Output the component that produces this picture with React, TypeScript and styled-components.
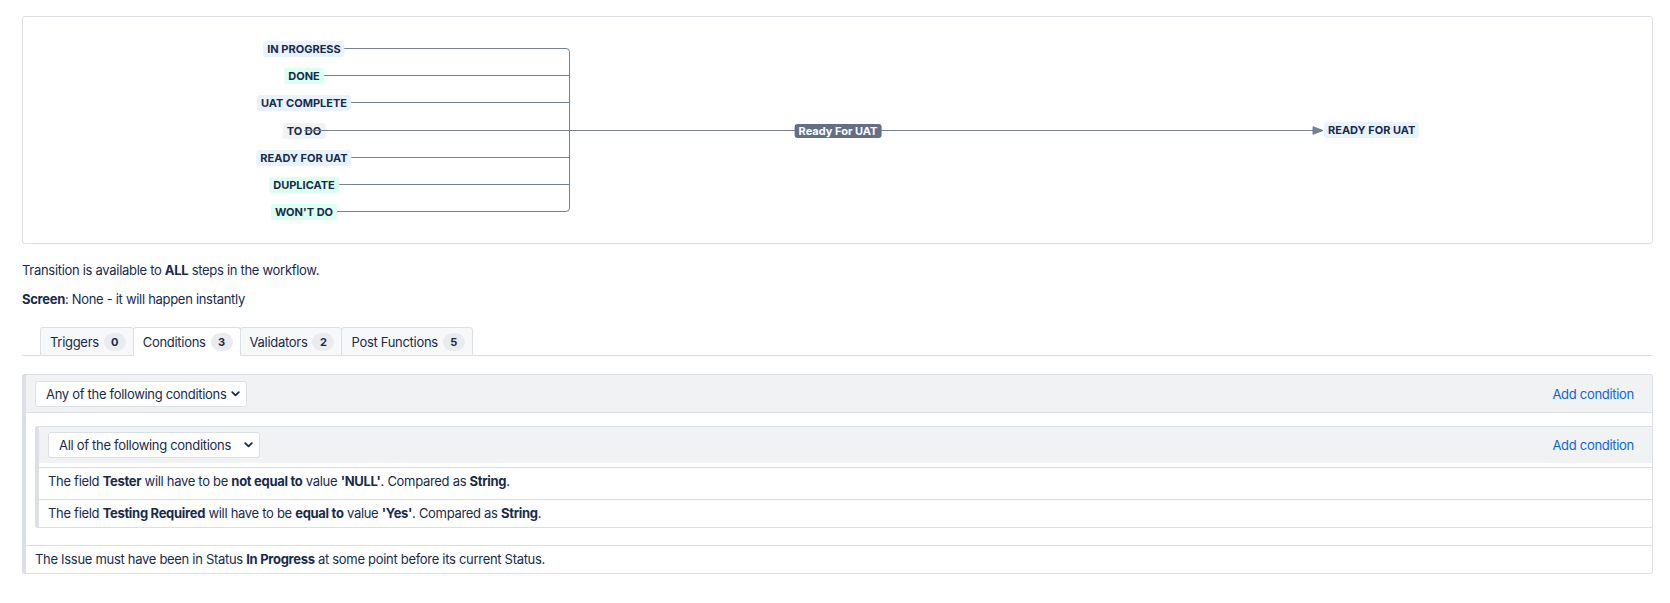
import React from "react";
import styled, { createGlobalStyle } from "styled-components";

const GlobalStyle = createGlobalStyle`
  body {
    margin: 0;
    background: #ffffff;
    color: #172b4d;
    font-family: Inter, "Noto Sans", sans-serif;
    font-size: 13px;
    letter-spacing: -0.3px;
  }
`;

type Tone = "blue" | "green" | "gray";

const statuses: { label: string; tone: Tone }[] = [
  { label: "IN PROGRESS", tone: "blue" },
  { label: "DONE", tone: "green" },
  { label: "UAT COMPLETE", tone: "blue" },
  { label: "TO DO", tone: "gray" },
  { label: "READY FOR UAT", tone: "blue" },
  { label: "DUPLICATE", tone: "green" },
  { label: "WON'T DO", tone: "green" },
];

// diagram geometry, relative to the card's padding box
const ROW_TOP = 31;
const ROW_STEP = 27.17;
const SOURCE_X = 281;
const JOIN_X = 546;
const TARGET_X = 1301;
const MAIN_ROW = 3;
const rowY = (i: number) => Math.round(ROW_TOP + i * ROW_STEP) + 0.5;

const toneBg: Record<Tone, string> = {
  blue: "#e9f2ff",
  green: "#dcfff1",
  gray: "#f1f2f4",
};

const tabs = [
  { name: "Triggers", count: 0 },
  { name: "Conditions", count: 3, active: true },
  { name: "Validators", count: 2 },
  { name: "Post Functions", count: 5 },
];

function Chevron() {
  return (
    <ChevronIcon width="9" height="6" viewBox="0 0 9 6">
      <path
        d="M1.2 1.2 L4.5 4.4 L7.8 1.2"
        fill="none"
        stroke="#172b4d"
        strokeWidth="1.8"
        strokeLinecap="round"
        strokeLinejoin="round"
      />
    </ChevronIcon>
  );
}

function GroupSelect({ value }: { value: string }) {
  return (
    <SelectWrap>
      <Select defaultValue={value}>
        <option>Any of the following conditions</option>
        <option>All of the following conditions</option>
      </Select>
      <Chevron />
    </SelectWrap>
  );
}

function App() {
  const mainY = rowY(MAIN_ROW);
  const top = rowY(0);
  const bottom = rowY(statuses.length - 1);

  return (
    <>
      <GlobalStyle />
      <Page>
        <DiagramCard>
          <Lines width="100%" height="100%">
            {statuses.map((s, i) =>
              i === MAIN_ROW ? null : (
                <line
                  key={s.label}
                  x1={SOURCE_X}
                  x2={JOIN_X - (i === 0 || i === statuses.length - 1 ? 3 : 0)}
                  y1={rowY(i)}
                  y2={rowY(i)}
                />
              )
            )}
            <path
              d={`M ${JOIN_X - 3} ${top} Q ${JOIN_X + 0.5} ${top} ${JOIN_X + 0.5} ${top + 3.5} V ${bottom - 3.5} Q ${JOIN_X + 0.5} ${bottom} ${JOIN_X - 3} ${bottom}`}
              fill="none"
            />
          </Lines>

          {statuses.map((s, i) => (
            <SourceNode key={s.label} style={{ top: rowY(i) }}>
              <Lozenge $tone={s.tone}>{s.label}</Lozenge>
            </SourceNode>
          ))}

          <Trunk width="100%" height="100%">
            <line x1={SOURCE_X} x2={TARGET_X - 10} y1={mainY} y2={mainY} />
            <polygon
              points={`${TARGET_X - 11},${mainY - 3.8} ${TARGET_X - 1},${mainY} ${TARGET_X - 11},${mainY + 3.8}`}
            />
          </Trunk>

          <TransitionLabel style={{ top: mainY, left: 815 }}>
            Ready For UAT
          </TransitionLabel>

          <TargetNode style={{ top: mainY - 1, left: TARGET_X }}>
            <Lozenge $tone="blue">READY FOR UAT</Lozenge>
          </TargetNode>
        </DiagramCard>

        <Info>
          Transition is available to <b>ALL</b> steps in the workflow.
        </Info>
        <Info>
          <b>Screen</b>: None - it will happen instantly
        </Info>

        <TabBar>
          {tabs.map((t) => (
            <Tab key={t.name} $active={!!t.active}>
              {t.name}
              <Badge>{t.count}</Badge>
            </Tab>
          ))}
        </TabBar>

        <Panel>
          <GroupHeader>
            <GroupSelect value="Any of the following conditions" />
            <AddLink href="#">Add condition</AddLink>
          </GroupHeader>
          <PanelBody>
            <InnerGroup>
              <GroupHeader $inner>
                <GroupSelect value="All of the following conditions" />
                <AddLink href="#">Add condition</AddLink>
              </GroupHeader>
              <RowList>
                <ConditionRow $tall>
                  The field <b>Tester</b> will have to be <b>not equal to</b>{" "}
                  value <b>'NULL'</b>. Compared as <b>String</b>.
                </ConditionRow>
                <ConditionRow>
                  The field <b>Testing Required</b> will have to be{" "}
                  <b>equal to</b> value <b>'Yes'</b>. Compared as{" "}
                  <b>String</b>.
                </ConditionRow>
              </RowList>
            </InnerGroup>
          </PanelBody>
          <ConditionRow>
            The Issue must have been in Status <b>In Progress</b> at some point
            before its current Status.
          </ConditionRow>
        </Panel>
      </Page>
    </>
  );
}

export default App;

const Page = styled.div`
  padding: 16px 17px 30px 22px;
  b {
    font-weight: 700;
  }
`;

const DiagramCard = styled.div`
  position: relative;
  height: 228px;
  box-sizing: border-box;
  border: 1px solid #dcdfe4;
  border-radius: 3px;
  overflow: hidden;
`;

const Lines = styled.svg`
  position: absolute;
  inset: 0;
  z-index: 0;
  stroke: #758195;
  stroke-width: 1;
`;

const Trunk = styled(Lines)`
  z-index: 2;
  fill: #758195;
  pointer-events: none;
`;

const SourceNode = styled.div`
  position: absolute;
  left: ${SOURCE_X}px;
  z-index: 1;
  transform: translate(-50%, -50%);
`;

const TargetNode = styled.div`
  position: absolute;
  z-index: 1;
  transform: translateY(-50%);
`;

const Lozenge = styled.span<{ $tone: Tone }>`
  display: inline-block;
  height: 16px;
  line-height: 16px;
  padding: 0 4px;
  border-radius: 3px;
  background: ${(p) => toneBg[p.$tone]};
  color: #172b4d;
  font-size: 11px;
  font-weight: 700;
  letter-spacing: 0;
  white-space: nowrap;
  vertical-align: top;
`;

const TransitionLabel = styled.div`
  position: absolute;
  z-index: 3;
  transform: translate(-50%, -50%);
  height: 14px;
  line-height: 14px;
  padding: 0 4px;
  border-radius: 3px;
  background: #626f86;
  color: #ffffff;
  font-size: 11px;
  font-weight: 700;
  letter-spacing: 0;
  white-space: nowrap;
`;

const Info = styled.p`
  margin: 16px 0 0;
  line-height: 20px;
  & + & {
    margin-top: 9px;
  }
`;

const TabBar = styled.div`
  display: flex;
  margin-top: 18px;
  padding-left: 18px;
  border-bottom: 1px solid #dcdfe4;
`;

const Tab = styled.div<{ $active: boolean }>`
  display: flex;
  align-items: center;
  gap: 5px;
  height: 27px;
  padding: 0 7px 0 9px;
  margin: 0 0 -1px -1px;
  border: 1px solid #dcdfe4;
  border-bottom: 1px solid ${(p) => (p.$active ? "#ffffff" : "#dcdfe4")};
  border-radius: 3px 3px 0 0;
  background: ${(p) => (p.$active ? "#ffffff" : "#f7f8f9")};
  cursor: pointer;
  &:first-child {
    margin-left: 0;
  }
`;

const Badge = styled.span`
  display: inline-flex;
  align-items: center;
  justify-content: center;
  min-width: 22px;
  height: 18px;
  padding: 0 1px;
  box-sizing: border-box;
  border-radius: 9px;
  background: #e9ebee;
  font-size: 11px;
  font-weight: 700;
  letter-spacing: 0;
`;

const Panel = styled.div`
  margin-top: 18px;
  border: 1px solid #dcdfe4;
  border-left: 4px solid #dcdfe4;
  border-radius: 3px;
`;

const GroupHeader = styled.div<{ $inner?: boolean }>`
  display: flex;
  align-items: center;
  justify-content: space-between;
  height: ${(p) => (p.$inner ? "36px" : "37px")};
  padding: 0 18px 0 9px;
  background: #f1f2f4;
  border-bottom: ${(p) => (p.$inner ? "none" : "1px solid #dcdfe4")};
`;

const SelectWrap = styled.div`
  position: relative;
  width: 212px;
  height: 26px;
`;

const Select = styled.select`
  appearance: none;
  width: 100%;
  height: 100%;
  box-sizing: border-box;
  padding: 0 18px 0 10px;
  border: 1px solid #dcdfe4;
  border-radius: 3px;
  background: #ffffff;
  color: #172b4d;
  font: inherit;
  letter-spacing: inherit;
  outline: none;
`;

const ChevronIcon = styled.svg`
  position: absolute;
  right: 7px;
  top: 10px;
  pointer-events: none;
`;

const AddLink = styled.a`
  color: #0c66e4;
  text-decoration: none;
`;

const PanelBody = styled.div`
  padding: 13px 0 17px 9px;
`;

const InnerGroup = styled.div`
  border-top: 1px solid #dcdfe4;
  border-bottom: 1px solid #dcdfe4;
  border-left: 4px solid #dcdfe4;
  border-radius: 3px 0 0 3px;
`;

const RowList = styled.div`
  padding-top: 4px;
`;

const ConditionRow = styled.div<{ $tall?: boolean }>`
  box-sizing: border-box;
  height: ${(p) => (p.$tall ? "32px" : "28px")};
  padding: 5px 9px 0;
  line-height: 17px;
  border-top: 1px solid #dcdfe4;
  white-space: nowrap;
`;
